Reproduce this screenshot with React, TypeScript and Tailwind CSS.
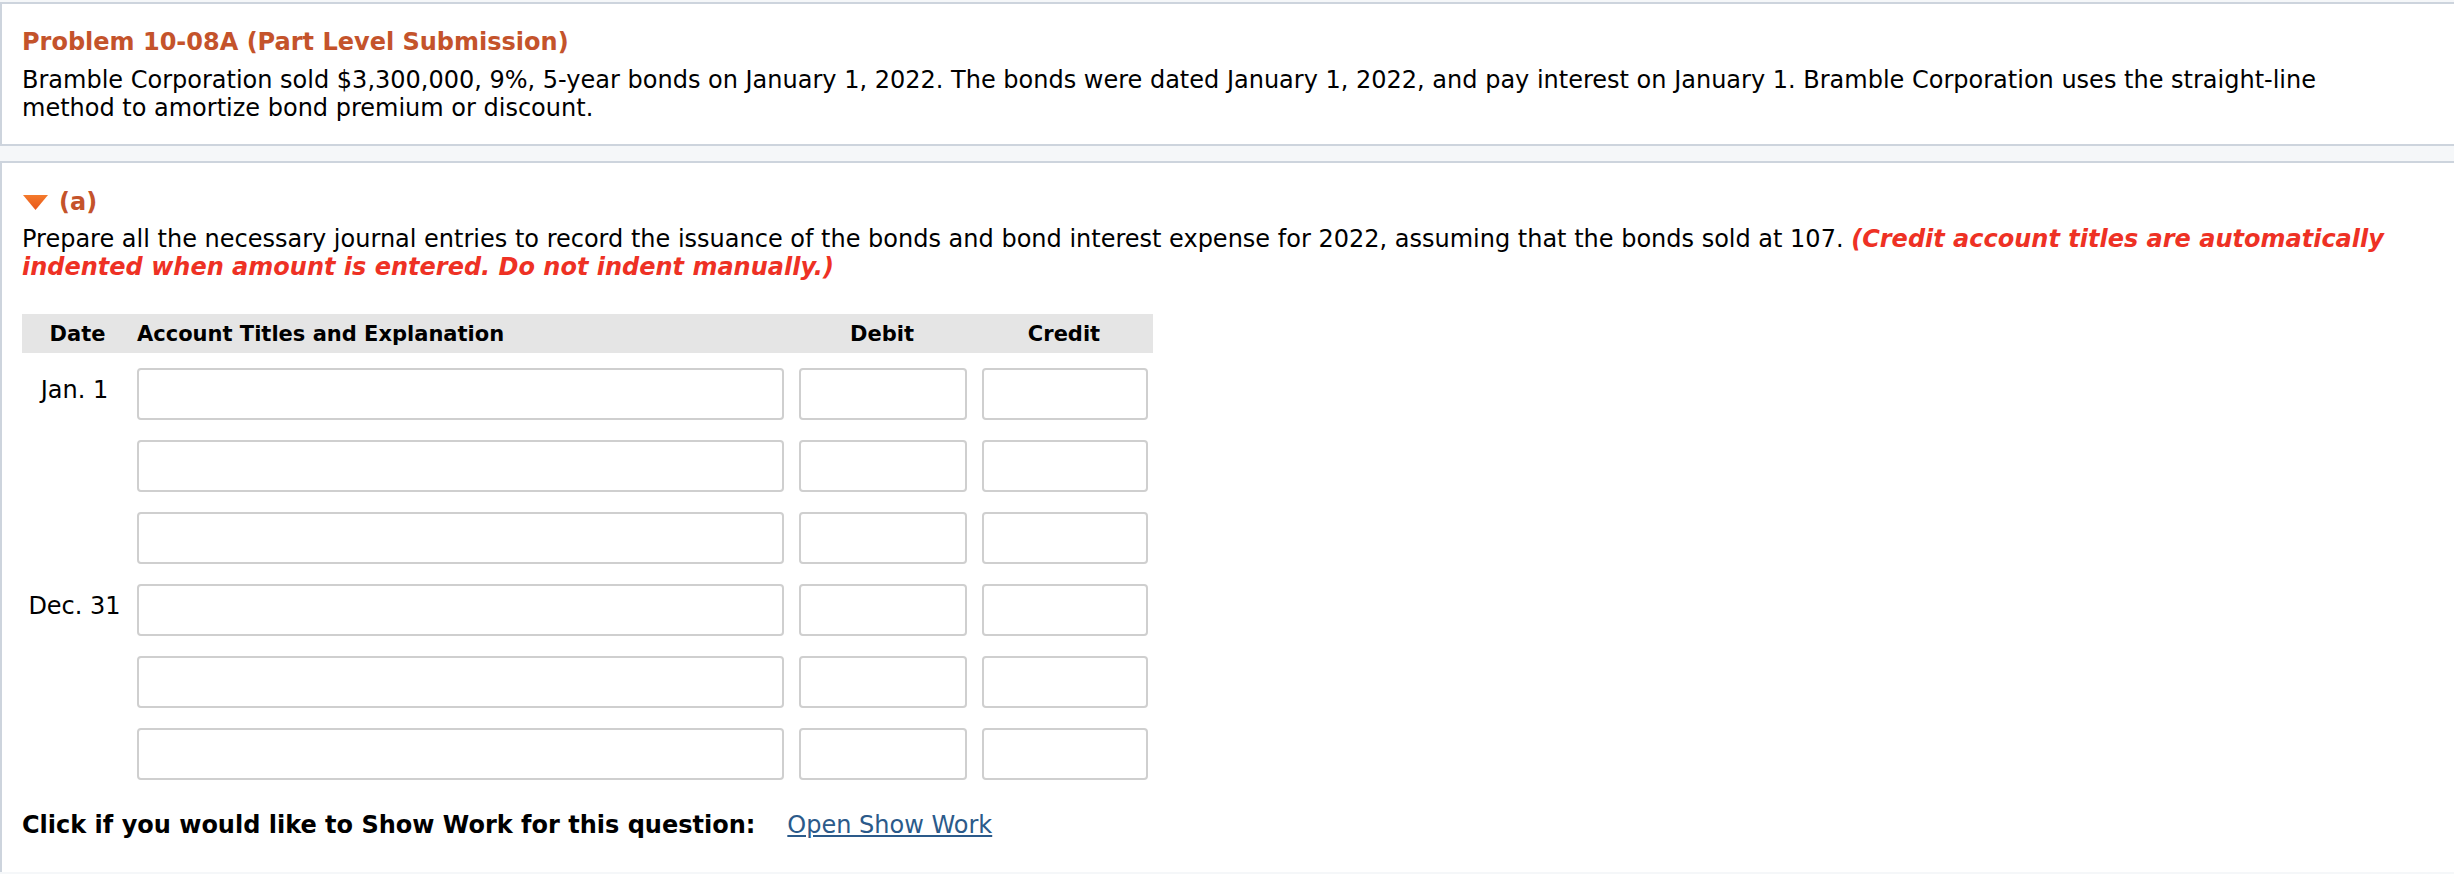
// Journal entry question page: problem statement card + part (a) card with
// a fixed grid of input rows (Date / Account Titles / Debit / Credit).

const FONT = "font-['DejaVu_Sans',Verdana,sans-serif]";

type Row = { date?: string };

const ROWS: Row[] = [
  { date: "Jan. 1" },
  {},
  {},
  { date: "Dec. 31" },
  {},
  {},
];

function Field({ className }: { className: string }) {
  return (
    <input
      type="text"
      className={
        "h-[52px] rounded-[4px] border-2 border-[#cfcfcf] bg-white outline-none " +
        className
      }
    />
  );
}

function JournalTable() {
  return (
    <div className="w-[1131px]">
      <div className="flex h-[39px] items-center bg-[#e5e5e5] text-[21px] font-bold text-black">
        <span className="w-[115px] pr-[4px] text-center">Date</span>
        <span className="w-[661px]">Account Titles and Explanation</span>
        <span className="w-[168px] text-center">Debit</span>
        <span className="ml-[15px] w-[166px] text-center">Credit</span>
      </div>
      <div className="mt-[15px] flex flex-col gap-[20px]">
        {ROWS.map((row, i) => (
          <div key={i} className="flex items-start">
            <span className="w-[115px] pt-[8px] pr-[10px] text-center text-[24px] leading-[28px]">
              {row.date ?? ""}
            </span>
            <Field className="w-[647px]" />
            <Field className="ml-[15px] w-[168px]" />
            <Field className="ml-[15px] w-[166px]" />
          </div>
        ))}
      </div>
    </div>
  );
}

export default function App() {
  return (
    <div className={"min-h-[874px] bg-[#f5f7f9] pt-[2px] text-black " + FONT}>
      {/* Enunciado do problema */}
      <section className="border-2 border-r-0 border-[#cdd4dd] bg-white px-[20px] pt-[24px] pb-[22px] text-[24px] leading-[28px]">
        <h1 className="font-bold text-[#c4532b]">Problem 10-08A (Part Level Submission)</h1>
        <p className="mt-[10px]">
          <span className="block whitespace-nowrap">
            Bramble Corporation sold $3,300,000, 9%, 5-year bonds on January 1, 2022. The bonds were dated
            January 1, 2022, and pay interest on January 1. Bramble Corporation uses the straight-line
          </span>
          <span className="block">method to amortize bond premium or discount.</span>
        </p>
      </section>

      {/* Parte (a) */}
      <section className="mt-[15px] min-h-[711px] border-2 border-r-0 border-b-0 border-[#cdd4dd] bg-white px-[20px] pt-[25px] text-[24px] leading-[28px]">
        <div className="flex items-center gap-[11px]">
          <svg width="25" height="15" viewBox="0 0 25 15" className="ml-[1px]">
            <defs>
              <linearGradient id="tri" x1="0" y1="0" x2="0" y2="1">
                <stop offset="0" stopColor="#f47a2c" />
                <stop offset="1" stopColor="#e8561a" />
              </linearGradient>
            </defs>
            <polygon points="0,0 25,0 12.5,15" fill="url(#tri)" />
          </svg>
          <span className="font-bold text-[#c4532b]">(a)</span>
        </div>

        <p className="mt-[9px]">
          <span className="block whitespace-nowrap">
            Prepare all the necessary journal entries to record the issuance of the bonds and bond interest
            expense for 2022, assuming that the bonds sold at 107.{" "}
            <b className="italic text-[#ee3124]">(Credit account titles are automatically</b>
          </span>
          <b className="block italic text-[#ee3124]">indented when amount is entered. Do not indent manually.)</b>
        </p>

        <div className="mt-[33px]">
          <JournalTable />
        </div>

        <div className="mt-[31px] flex items-center">
          <span className="font-bold">Click if you would like to Show Work for this question:</span>
          <a href="#" className="ml-[32px] text-[#2b5a8a] underline underline-offset-2">
            Open Show Work
          </a>
        </div>
      </section>
    </div>
  );
}
